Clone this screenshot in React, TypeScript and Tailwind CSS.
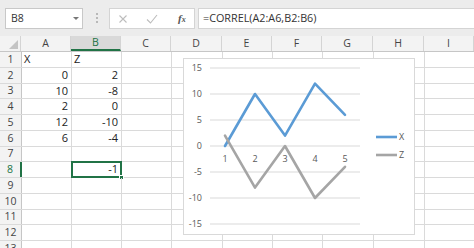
import React from 'react';

const COLS = [
  { name: 'A', w: 'w-[50px]' },
  { name: 'B', w: 'w-[50px]' },
  { name: 'C', w: 'w-[50px]' },
  { name: 'D', w: 'w-[51px]' },
  { name: 'E', w: 'w-[50px]' },
  { name: 'F', w: 'w-[50px]' },
  { name: 'G', w: 'w-[51px]' },
  { name: 'H', w: 'w-[51px]' },
  { name: 'I', w: 'w-[50px]' },
];

// cell values by row, [A, B]
const DATA: Record<number, [string, string]> = {
  1: ['X', 'Z'],
  2: ['0', '2'],
  3: ['10', '-8'],
  4: ['2', '0'],
  5: ['12', '-10'],
  6: ['6', '-4'],
  8: ['', '-1'],
};

const xs = [225, 255, 285, 315, 345];
const yOf = (v: number) => 146 - v * 5.2;
const X = [0, 10, 2, 12, 6];
const Z = [2, -8, 0, -10, -4];
const pts = (vals: number[]) => vals.map((v, i) => `${xs[i]},${yOf(v)}`).join(' ');

const Chart = () => (
  <div className="absolute left-[183px] top-[58px] w-[232px] h-[177px] bg-white border border-[#d9d9d9]">
    <svg width="230" height="175" viewBox="184 59 230 175" className="block">
      {[15, 10, 5, 0, -5, -10, -15].map((v) => (
        <g key={v}>
          <line x1="210" x2="360" y1={yOf(v)} y2={yOf(v)} stroke="#d9d9d9" strokeWidth="1" />
          <text x="202" y={yOf(v) + 3} textAnchor="end" fontSize="9" fill="#595959" fontFamily="Open Sans, sans-serif">
            {v}
          </text>
        </g>
      ))}
      {xs.map((x, i) => (
        <text key={x} x={x} y="162" textAnchor="middle" fontSize="9" fill="#595959" fontFamily="Open Sans, sans-serif">
          {i + 1}
        </text>
      ))}
      <polyline points={pts(X)} fill="none" stroke="#5b9bd5" strokeWidth="2.6" strokeLinejoin="round" strokeLinecap="round" />
      <polyline points={pts(Z)} fill="none" stroke="#a5a5a5" strokeWidth="2.6" strokeLinejoin="round" strokeLinecap="round" />
      <line x1="376" x2="397" y1="137" y2="137" stroke="#5b9bd5" strokeWidth="2.6" />
      <text x="399" y="140" fontSize="9" fill="#595959" fontFamily="Open Sans, sans-serif">X</text>
      <line x1="376" x2="397" y1="155" y2="155" stroke="#a5a5a5" strokeWidth="2.6" />
      <text x="399" y="158" fontSize="9" fill="#595959" fontFamily="Open Sans, sans-serif">Z</text>
    </svg>
  </div>
);

const FormulaBar = () => (
  <div className="h-[36px] bg-[#ececec] flex items-start pt-[8px] text-[10.5px] text-[#333]">
    <div className="ml-[5px] w-[78px] h-[21px] bg-white border border-[#c8c8c8] flex items-center justify-between pl-[5px] pr-[3px]">
      <span>B8</span>
      <span className="w-0 h-0 border-x-[3px] border-x-transparent border-t-[3px] border-t-[#777]" />
    </div>
    <div className="ml-[13px] mt-[5px] flex flex-col gap-[2px]">
      <span className="w-[2px] h-[2px] bg-[#b8b8b8]" />
      <span className="w-[2px] h-[2px] bg-[#b8b8b8]" />
      <span className="w-[2px] h-[2px] bg-[#b8b8b8]" />
    </div>
    <div className="ml-[11px] w-[86px] h-[21px] bg-white border border-[#d4d4d4] flex items-center">
      <svg width="10" height="10" viewBox="0 0 10 10" className="ml-[8px]">
        <path d="M1.5 1.5 L8.5 8.5 M8.5 1.5 L1.5 8.5" stroke="#bdbdbd" strokeWidth="1.1" />
      </svg>
      <svg width="12" height="10" viewBox="0 0 12 10" className="ml-[18px]">
        <path d="M1 5.5 L4.5 9 L11 1" fill="none" stroke="#bdbdbd" strokeWidth="1.1" />
      </svg>
      <span
        className="ml-[20px] italic font-bold text-[11px] text-[#555]"
        style={{ fontFamily: '"Liberation Serif", serif' }}
      >
        f<span className="text-[8px]">x</span>
      </span>
    </div>
    <div className="ml-[3px] flex-1 h-[21px] bg-white border border-[#d4d4d4] border-r-0 flex items-center pl-[4px] text-[10.8px]">
      =CORREL(A2:A6,B2:B6)
    </div>
  </div>
);

const rowH = (r: number) => (r % 4 === 3 ? 'h-[15px]' : 'h-[16px]');

export default function App() {
  return (
    <div
      className="relative w-[474px] h-[248px] overflow-hidden bg-white"
      style={{ fontFamily: '"Open Sans", "Noto Sans", sans-serif' }}
    >
      <FormulaBar />

      {/* column headers */}
      <div className="flex h-[16px] bg-[#f3f3f3] text-[10.5px] text-[#444] border-b border-[#c6c6c6]">
        <div className="w-[22px] border-r border-[#d4d4d4] relative">
          <span className="absolute right-[2px] bottom-[2px] w-0 h-0 border-l-[9px] border-l-transparent border-b-[9px] border-b-[#c4c4c4]" />
        </div>
        {COLS.map((c) => (
          <div
            key={c.name}
            className={`${c.w} shrink-0 flex items-center justify-center border-r border-[#d4d4d4] ${
              c.name === 'B' ? 'bg-[#d9d9d9] text-[#217346] border-b-2 border-b-[#217346]' : ''
            }`}
          >
            {c.name}
          </div>
        ))}
      </div>

      {/* rows */}
      {Array.from({ length: 13 }, (_, i) => i + 1).map((r) => {
        const d = DATA[r];
        const sel = r === 8;
        return (
          <div key={r} className={`flex ${rowH(r)} text-[11px] text-[#222] border-b border-[#dadada]`}>
            <div
              className={`w-[22px] shrink-0 flex items-center justify-center bg-[#f3f3f3] text-[10.5px] ${
                sel ? 'bg-[#d9d9d9] text-[#217346] border-r-2 border-[#217346]' : 'text-[#444] border-r border-[#c6c6c6]'
              }`}
            >
              {r}
            </div>
            {COLS.map((c, ci) => {
              const v = d ? d[ci] : undefined;
              const isNum = v !== undefined && /^-?\d/.test(v);
              const isSel = sel && c.name === 'B';
              return (
                <div
                  key={c.name}
                  className={`${c.w} shrink-0 relative flex items-center border-r border-[#dadada] ${
                    isNum ? 'justify-end pr-[3px]' : 'justify-start pl-[2px]'
                  }`}
                >
                  {v}
                  {isSel && (
                    <>
                      <span className="absolute -left-[1px] -top-[1px] -right-[1px] -bottom-[1px] border-2 border-[#217346]" />
                      <span className="absolute -right-[3px] -bottom-[3px] w-[5px] h-[5px] bg-[#217346] border border-white" />
                    </>
                  )}
                </div>
              );
            })}
          </div>
        );
      })}

      <Chart />
    </div>
  );
}
